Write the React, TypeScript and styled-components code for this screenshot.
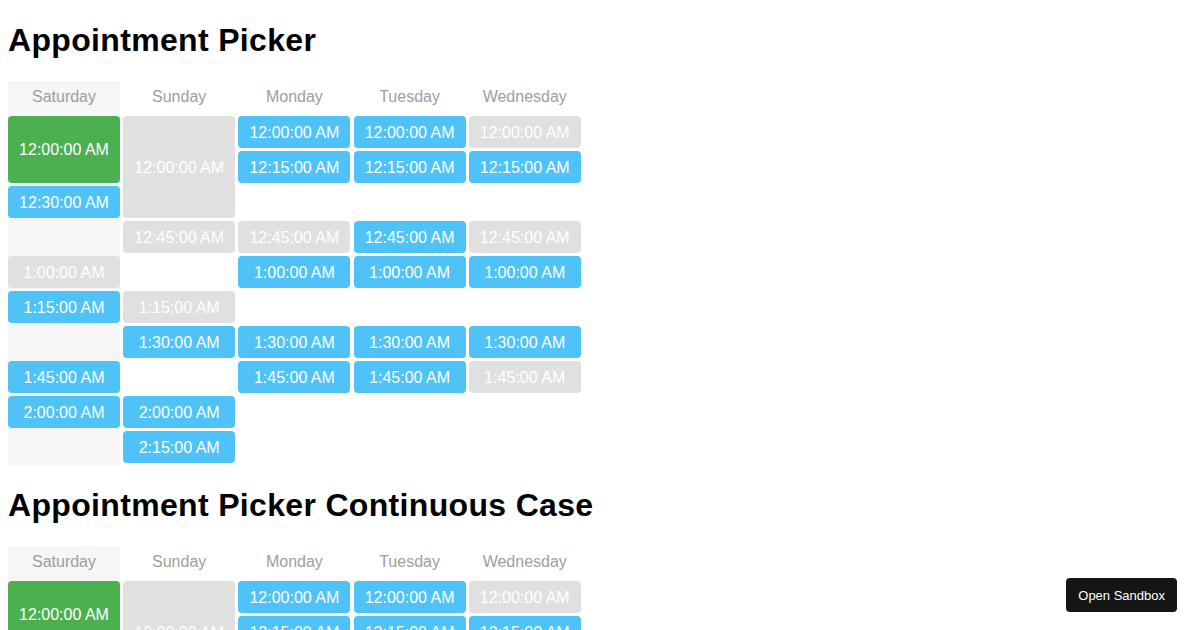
import React from "react";
import styled, { createGlobalStyle } from "styled-components";

const GlobalStyle = createGlobalStyle`
  body {
    margin: 8px;
    font-family: "Liberation Sans", Arial, sans-serif;
    background: #fff;
  }
`;

type Kind = "selected" | "open" | "taken";
type Slot = { row: number; span?: number; time: string; kind: Kind };
type Day = { name: string; weekend?: boolean; slots: Slot[] };

const days: Day[] = [
  {
    name: "Saturday",
    weekend: true,
    slots: [
      { row: 1, span: 2, time: "12:00:00 AM", kind: "selected" },
      { row: 3, time: "12:30:00 AM", kind: "open" },
      { row: 5, time: "1:00:00 AM", kind: "taken" },
      { row: 6, time: "1:15:00 AM", kind: "open" },
      { row: 8, time: "1:45:00 AM", kind: "open" },
      { row: 9, time: "2:00:00 AM", kind: "open" },
    ],
  },
  {
    name: "Sunday",
    slots: [
      { row: 1, span: 3, time: "12:00:00 AM", kind: "taken" },
      { row: 4, time: "12:45:00 AM", kind: "taken" },
      { row: 6, time: "1:15:00 AM", kind: "taken" },
      { row: 7, time: "1:30:00 AM", kind: "open" },
      { row: 9, time: "2:00:00 AM", kind: "open" },
      { row: 10, time: "2:15:00 AM", kind: "open" },
    ],
  },
  {
    name: "Monday",
    slots: [
      { row: 1, time: "12:00:00 AM", kind: "open" },
      { row: 2, time: "12:15:00 AM", kind: "open" },
      { row: 4, time: "12:45:00 AM", kind: "taken" },
      { row: 5, time: "1:00:00 AM", kind: "open" },
      { row: 7, time: "1:30:00 AM", kind: "open" },
      { row: 8, time: "1:45:00 AM", kind: "open" },
    ],
  },
  {
    name: "Tuesday",
    slots: [
      { row: 1, time: "12:00:00 AM", kind: "open" },
      { row: 2, time: "12:15:00 AM", kind: "open" },
      { row: 4, time: "12:45:00 AM", kind: "open" },
      { row: 5, time: "1:00:00 AM", kind: "open" },
      { row: 7, time: "1:30:00 AM", kind: "open" },
      { row: 8, time: "1:45:00 AM", kind: "open" },
    ],
  },
  {
    name: "Wednesday",
    slots: [
      { row: 1, time: "12:00:00 AM", kind: "taken" },
      { row: 2, time: "12:15:00 AM", kind: "open" },
      { row: 4, time: "12:45:00 AM", kind: "taken" },
      { row: 5, time: "1:00:00 AM", kind: "open" },
      { row: 7, time: "1:30:00 AM", kind: "open" },
      { row: 8, time: "1:45:00 AM", kind: "taken" },
    ],
  },
];

const colors: Record<Kind, string> = {
  selected: "#4caf50",
  open: "#4fc3f7",
  taken: "#e0e0e0",
};

const Title = styled.h1`
  font-size: 32px;
  font-weight: bold;
  letter-spacing: 0.33px;
  margin: 21.44px 0;
  color: #000;

  &:first-of-type {
    margin-top: 14.44px;
  }
`;

const Picker = styled.div`
  display: grid;
  grid-template-columns: repeat(5, 112px);
  column-gap: 3.2px;
`;

const Column = styled.div<{ $weekend?: boolean }>`
  display: grid;
  grid-template-rows: 35px repeat(10, 35px);
  background: ${(p) => (p.$weekend ? "#f5f6f5" : "transparent")};
`;

const DayName = styled.div`
  height: 32px;
  line-height: 32px;
  text-align: center;
  font-size: 16px;
  color: #9e9e9e;
`;

const TimeSlot = styled.button<{ $kind: Kind; $row: number; $span: number }>`
  grid-row: ${(p) => p.$row + 1} / span ${(p) => p.$span};
  height: ${(p) => p.$span * 35 - 3}px;
  border: none;
  border-radius: 4px;
  padding: 2px 0 0;
  display: flex;
  align-items: center;
  justify-content: center;
  font-family: "Liberation Sans", Arial, sans-serif;
  font-size: 16px;
  color: #fff;
  background: ${(p) => colors[p.$kind]};
  cursor: ${(p) => (p.$kind === "taken" ? "default" : "pointer")};
`;

const SandboxButton = styled.a`
  position: fixed;
  right: 23px;
  bottom: 18px;
  height: 34px;
  padding: 0 12px;
  display: flex;
  align-items: center;
  background: #151515;
  color: #fff;
  border-radius: 4px;
  font-family: "Liberation Sans", Arial, sans-serif;
  font-size: 13px;
  text-decoration: none;
`;

function AppointmentPicker() {
  return (
    <Picker>
      {days.map((d) => (
        <Column key={d.name} $weekend={d.weekend}>
          <DayName>{d.name}</DayName>
          {d.slots.map((s) => (
            <TimeSlot key={s.time} $kind={s.kind} $row={s.row} $span={s.span ?? 1}>
              {s.time}
            </TimeSlot>
          ))}
        </Column>
      ))}
    </Picker>
  );
}

export default function App() {
  return (
    <>
      <GlobalStyle />
      <Title>Appointment Picker</Title>
      <AppointmentPicker />
      <Title>Appointment Picker Continuous Case</Title>
      <AppointmentPicker />
      <SandboxButton href="#">Open Sandbox</SandboxButton>
    </>
  );
}
